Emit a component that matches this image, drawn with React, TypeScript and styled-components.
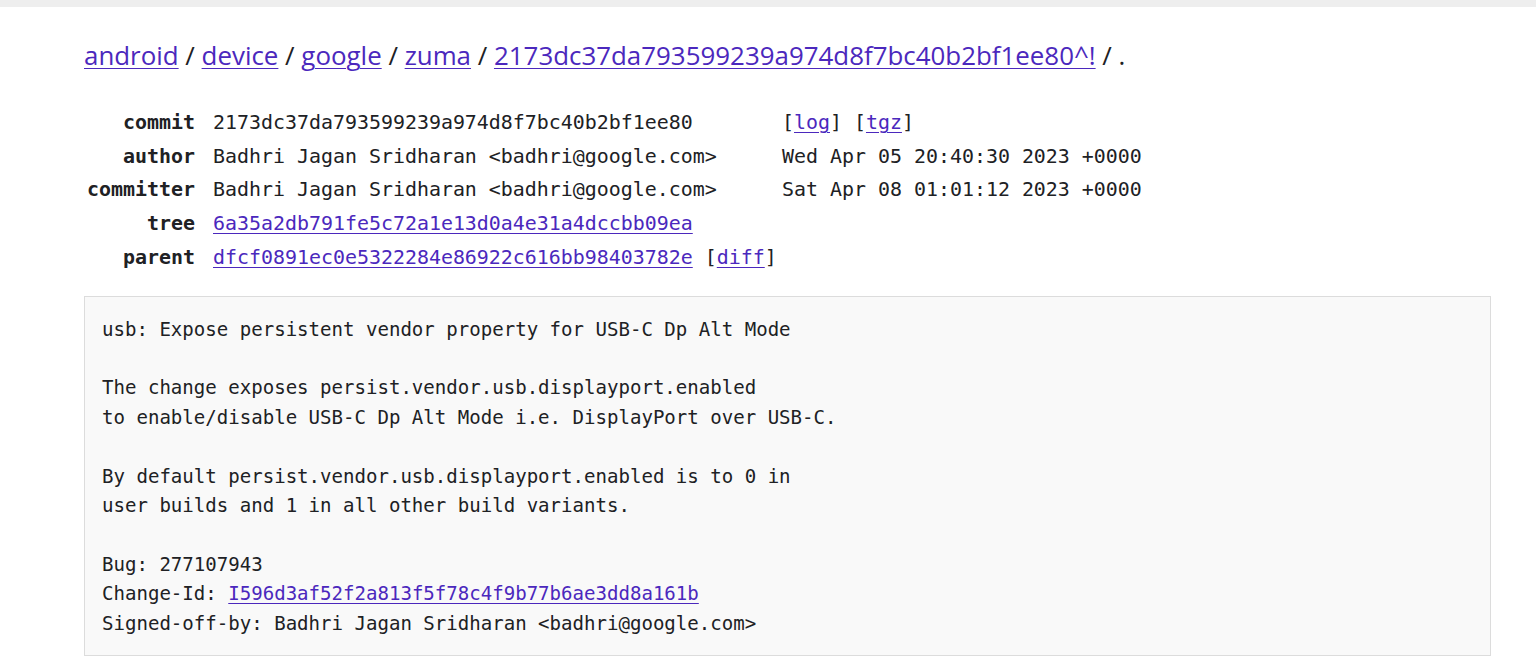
import React from "react";
import styled, { createGlobalStyle } from "styled-components";

const Global = createGlobalStyle`
  html, body { margin: 0; padding: 0; background: #fff; }
  body { font-family: "Open Sans", sans-serif; color: #202124; }
`;

const TopBar = styled.div`
  height: 7px;
  background: #eeeeee;
`;

const Main = styled.main`
  padding: 31px 45px 0 84px;
`;

const Crumbs = styled.div`
  font-family: "Open Sans", sans-serif;
  font-size: 25.9px;
  line-height: 34px;
  color: #202124;
  margin-bottom: 34px;
  white-space: nowrap;
`;

const Link = styled.a`
  color: #4b28bd;
  text-decoration: underline;
  text-decoration-thickness: 1px;
  text-underline-offset: 3px;
  cursor: pointer;
`;

const Meta = styled.div`
  display: grid;
  grid-template-columns: 111px 551px auto;
  column-gap: 18px;
  font-family: "DejaVu Sans Mono", monospace;
  font-size: 19.93px;
  line-height: 33.7px;
  color: #202124;
  margin-bottom: 21px;
`;

const Label = styled.div`
  text-align: right;
  font-weight: bold;
  white-space: nowrap;
`;

const Value = styled.div`
  white-space: nowrap;
`;

const Message = styled.pre`
  margin: 0;
  background: #f9f9f9;
  border: 1px solid #dcdcdc;
  padding: 18px 17px 17px 17px;
  font-family: "DejaVu Sans Mono", monospace;
  font-size: 19.07px;
  line-height: 29.4px;
  color: #202124;
  white-space: pre;
`;

const rows: { label: string; value: React.ReactNode; extra?: React.ReactNode }[] = [
  {
    label: "commit",
    value: "2173dc37da793599239a974d8f7bc40b2bf1ee80",
    extra: (
      <>
        [<Link>log</Link>] [<Link>tgz</Link>]
      </>
    ),
  },
  {
    label: "author",
    value: "Badhri Jagan Sridharan <badhri@google.com>",
    extra: "Wed Apr 05 20:40:30 2023 +0000",
  },
  {
    label: "committer",
    value: "Badhri Jagan Sridharan <badhri@google.com>",
    extra: "Sat Apr 08 01:01:12 2023 +0000",
  },
  {
    label: "tree",
    value: <Link>6a35a2db791fe5c72a1e13d0a4e31a4dccbb09ea</Link>,
  },
  {
    label: "parent",
    value: (
      <>
        <Link>dfcf0891ec0e5322284e86922c616bb98403782e</Link> [<Link>diff</Link>]
      </>
    ),
  },
];

export default function App() {
  const crumbs = ["android", "device", "google", "zuma", "2173dc37da793599239a974d8f7bc40b2bf1ee80^!"];
  return (
    <>
      <Global />
      <TopBar />
      <Main>
        <Crumbs>
          {crumbs.map((c) => (
            <React.Fragment key={c}>
              <Link>{c}</Link>
              {" / "}
            </React.Fragment>
          ))}
          .
        </Crumbs>
        <Meta>
          {rows.map((r) => (
            <React.Fragment key={r.label}>
              <Label>{r.label}</Label>
              <Value>{r.value}</Value>
              <Value>{r.extra ?? ""}</Value>
            </React.Fragment>
          ))}
        </Meta>
        <Message>
          {"usb: Expose persistent vendor property for USB-C Dp Alt Mode\n\nThe change exposes persist.vendor.usb.displayport.enabled\nto enable/disable USB-C Dp Alt Mode i.e. DisplayPort over USB-C.\n\nBy default persist.vendor.usb.displayport.enabled is to 0 in\nuser builds and 1 in all other build variants.\n\nBug: 277107943\nChange-Id: "}
          <Link>I596d3af52f2a813f5f78c4f9b77b6ae3dd8a161b</Link>
          {"\nSigned-off-by: Badhri Jagan Sridharan <badhri@google.com>"}
        </Message>
      </Main>
    </>
  );
}
